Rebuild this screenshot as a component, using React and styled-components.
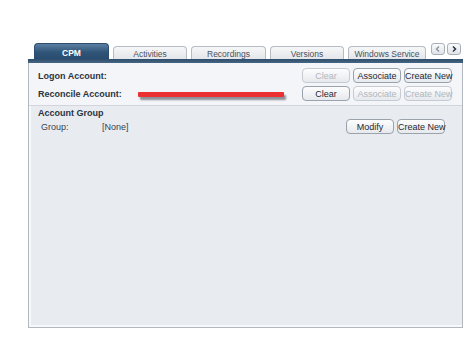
import React from "react";
import styled, { createGlobalStyle } from "styled-components";

const Global = createGlobalStyle`
  html, body {
    margin: 0;
    padding: 0;
    background: #ffffff;
  }
  body {
    font-family: "Liberation Sans", Arial, sans-serif;
  }
`;

const tabs = [
  { name: "CPM", width: 75 },
  { name: "Activities", width: 74 },
  { name: "Recordings", width: 75 },
  { name: "Versions", width: 74 },
  { name: "Windows Service", width: 78 },
];

export default function App() {
  return (
    <>
      <Global />
      <Page>
        <Window>
          <TabRow>
            <Tabs>
              {tabs.map((t, i) => (
                <Tab key={t.name} active={i === 0} w={t.width}>
                  {t.name}
                </Tab>
              ))}
            </Tabs>
            <NavButtons>
              <NavButton>
                <svg width="8" height="8" viewBox="0 0 8 8">
                  <path d="M5 1.5 L2.5 4 L5 6.5" fill="none" stroke="#8a9099" strokeWidth="1.3" />
                </svg>
              </NavButton>
              <NavButton>
                <svg width="8" height="8" viewBox="0 0 8 8">
                  <path d="M3 1.5 L5.5 4 L3 6.5" fill="none" stroke="#2b3440" strokeWidth="1.5" />
                </svg>
              </NavButton>
            </NavButtons>
          </TabRow>
          <Bar />
          <Content>
            <AccountSection>
              <AccountRow>
                <Label>Logon Account:</Label>
                <Buttons>
                  <Button disabled>Clear</Button>
                  <Button>Associate</Button>
                  <Button>Create New</Button>
                </Buttons>
              </AccountRow>
              <AccountRow>
                <Label>Reconcile Account:</Label>
                <Redaction />
                <Buttons>
                  <Button>Clear</Button>
                  <Button disabled>Associate</Button>
                  <Button disabled>Create New</Button>
                </Buttons>
              </AccountRow>
            </AccountSection>
            <GroupSection>
              <SectionTitle>Account Group</SectionTitle>
              <GroupRow>
                <FieldName>Group:</FieldName>
                <FieldValue>[None]</FieldValue>
                <Buttons>
                  <Button>Modify</Button>
                  <Button>Create New</Button>
                </Buttons>
              </GroupRow>
            </GroupSection>
          </Content>
        </Window>
      </Page>
    </>
  );
}

const Page = styled.div`
  width: 474px;
  height: 348px;
  padding: 42px 0 0 28px;
  box-sizing: border-box;
`;

const Window = styled.div`
  width: 435px;
  display: flex;
  flex-direction: column;
`;

const TabRow = styled.div`
  height: 17px;
  display: flex;
  align-items: flex-end;
  justify-content: space-between;
`;

const Tabs = styled.div`
  display: flex;
  align-items: flex-end;
  gap: 4px;
  padding-left: 6px;
`;

const Tab = styled.div`
  width: ${(p) => p.w}px;
  height: ${(p) => (p.active ? 16 : 13)}px;
  box-sizing: border-box;
  border-radius: 4px 4px 0 0;
  border: 1px solid ${(p) => (p.active ? "#2c4d6e" : "#b6bcc4")};
  border-bottom: none;
  background: ${(p) =>
    p.active
      ? "linear-gradient(#5b7fa3, #2f5579 55%, #2a4c6e)"
      : "linear-gradient(#f6f7f8, #e3e6ea)"};
  color: ${(p) => (p.active ? "#ffffff" : "#4a525e")};
  font-family: "Liberation Sans", Arial, sans-serif;
  font-size: 8.5px;
  font-weight: ${(p) => (p.active ? 700 : 400)};
  display: flex;
  align-items: center;
  justify-content: center;
  white-space: nowrap;
  padding-top: ${(p) => (p.active ? 2 : 1)}px;
`;

const NavButtons = styled.div`
  display: flex;
  gap: 2px;
  margin: 1px 2px 0 0;
  align-self: flex-start;
`;

const NavButton = styled.div`
  width: 14px;
  height: 12px;
  box-sizing: border-box;
  border: 1px solid #a9b0b9;
  border-radius: 3px;
  background: linear-gradient(#fbfbfc, #dfe3e8);
  display: flex;
  align-items: center;
  justify-content: center;
`;

const Bar = styled.div`
  height: 4px;
  background: linear-gradient(#2f4d6c, #456683);
`;

const Content = styled.div`
  height: 265px;
  box-sizing: border-box;
  border: 1px solid #b3b8bf;
  border-top: none;
  background: #e8ebf0;
  box-shadow: inset 2px -2px 0 #f7f8fa;
  display: flex;
  flex-direction: column;
`;

const AccountSection = styled.div`
  background: #f3f5f8;
  border-bottom: 1px solid #d2d6dc;
  padding: 5px 10px 4px 9px;
  display: flex;
  flex-direction: column;
  gap: 3px;
`;

const AccountRow = styled.div`
  height: 15px;
  display: flex;
  align-items: center;
  position: relative;
`;

const Label = styled.div`
  font-size: 9px;
  font-weight: 700;
  color: #2b3440;
  flex: 1;
`;

const Redaction = styled.div`
  position: absolute;
  left: 100px;
  top: 6px;
  width: 146px;
  height: 5px;
  background: #ec2f30;
  border-radius: 1px;
  box-shadow: 2px 3px 2px rgba(60, 60, 70, 0.55);
`;

const Buttons = styled.div`
  display: flex;
  gap: 3px;
`;

const Button = styled.button`
  width: 48px;
  height: 15px;
  box-sizing: border-box;
  padding: 0;
  border: 1px solid ${(p) => (p.disabled ? "#c6cbd1" : "#9aa2ac")};
  border-radius: 4px;
  background: linear-gradient(#fdfdfe, #e6e9ed);
  color: ${(p) => (p.disabled ? "#b0b6bd" : "#1f2833")};
  font-family: "Liberation Sans", Arial, sans-serif;
  font-size: 9px;
  white-space: nowrap;
`;

const GroupSection = styled.div`
  padding: 2px 17px 0 9px;
`;

const SectionTitle = styled.div`
  font-size: 9px;
  font-weight: 700;
  color: #2b3440;
`;

const GroupRow = styled.div`
  display: flex;
  align-items: center;
  margin-top: 1px;
  padding-left: 3px;
`;

const FieldName = styled.div`
  width: 61px;
  font-size: 9px;
  color: #3a4350;
`;

const FieldValue = styled.div`
  flex: 1;
  font-size: 9px;
  color: #3a4350;
`;
